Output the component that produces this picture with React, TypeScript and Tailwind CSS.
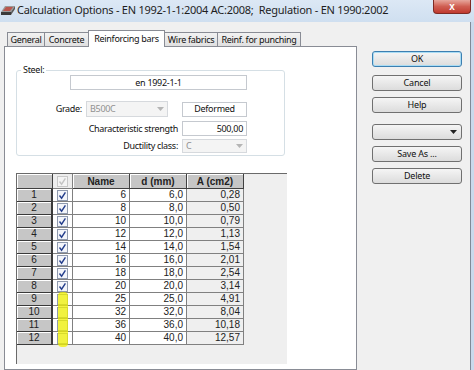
import React from "react";

const rows = [
  { n: 1, on: true, name: "6", d: "6,0", a: "0,28" },
  { n: 2, on: true, name: "8", d: "8,0", a: "0,50" },
  { n: 3, on: true, name: "10", d: "10,0", a: "0,79" },
  { n: 4, on: true, name: "12", d: "12,0", a: "1,13" },
  { n: 5, on: true, name: "14", d: "14,0", a: "1,54" },
  { n: 6, on: true, name: "16", d: "16,0", a: "2,01" },
  { n: 7, on: true, name: "18", d: "18,0", a: "2,54" },
  { n: 8, on: true, name: "20", d: "20,0", a: "3,14" },
  { n: 9, on: false, name: "25", d: "25,0", a: "4,91" },
  { n: 10, on: false, name: "32", d: "32,0", a: "8,04" },
  { n: 11, on: false, name: "36", d: "36,0", a: "10,18" },
  { n: 12, on: false, name: "40", d: "40,0", a: "12,57" },
];

const ui = { fontFamily: '"Noto Sans", "DejaVu Sans", sans-serif' };
const grid = { fontFamily: '"Liberation Sans", Arial, sans-serif' };

const Check = ({ on, dim }: { on: boolean; dim?: boolean }) => (
  <svg width="11" height="11" viewBox="0 0 11 11">
    <rect x="0.5" y="0.5" width="10" height="10" fill={dim ? "#f4f4f4" : "#f3f5fa"} stroke={dim ? "#c8c8c8" : "#8f9aae"} />
    {on && (
      <path d="M2.5 5.5 L4.6 8.2 L8.4 2.4" fill="none" stroke={dim ? "#c4c4c4" : "#243e8c"} strokeWidth="1.4" />
    )}
  </svg>
);

const Arrow = ({ color = "#222" }: { color?: string }) => (
  <svg width="7" height="4" viewBox="0 0 7 4">
    <path d="M0 0 H7 L3.5 4 Z" fill={color} />
  </svg>
);

const Btn = ({ label, focus, className = "" }: { label: string; focus?: boolean; className?: string }) => (
  <div
    className={`w-[90px] h-[16px] rounded-[3px] border flex items-center justify-center text-[9px] tracking-[-0.2px] text-[#111] bg-gradient-to-b from-[#f5f5f5] to-[#dcdcdc] ${
      focus ? "border-[#3c7fb1] shadow-[inset_0_0_0_1px_#a9dcf4]" : "border-[#707070]"
    } ${className}`}
  >
    {label}
  </div>
);

const Tab = ({ label, w, active }: { label: string; w: string; active?: boolean }) =>
  active ? (
    <div className={`${w} h-[17px] -mb-[1px] -ml-[1px] relative z-10 bg-white border border-b-0 border-[#898c95] flex items-start justify-center pt-[1px] whitespace-nowrap text-[9px] tracking-[-0.3px] text-[#111]`}>
      {label}
    </div>
  ) : (
    <div className={`${w} h-[14px] -ml-[1px] first:ml-0 border border-b-0 border-[#898c95] bg-gradient-to-b from-[#f2f2f2] to-[#e0e0e0] flex items-center justify-center whitespace-nowrap text-[9px] tracking-[-0.3px] text-[#111]`}>
      {label}
    </div>
  );

export default function App() {
  return (
    <div className="w-[474px] h-[370px] overflow-hidden bg-[#f0f0f0] flex flex-col" style={ui}>
      {/* Title bar */}
      <div className="h-[22px] shrink-0 flex items-start bg-gradient-to-b from-[#dce8f5] to-[#cfdff0]">
        <svg width="16" height="14" viewBox="0 0 16 14" className="mt-[3px] ml-[0px]">
          <path d="M1 9 L5 3 H15 L11 9 Z" fill="#9a9a9a" />
          <path d="M1 9 H11 V12 H1 Z" fill="#3a3a3a" />
          <path d="M11 9 L15 3 V6 L11 12 Z" fill="#5a5a5a" />
          <path d="M3 8 L6 4 H13 L10 8 Z" fill="#c0463c" opacity="0.8" />
        </svg>
        <div className="ml-[1px] mt-[3px] text-[11px] leading-[14px] text-[#1e1e1e] tracking-[-0.25px] whitespace-nowrap">
          Calculation Options - EN 1992-1-1:2004 AC:2008;&nbsp;&nbsp;Regulation - EN 1990:2002
        </div>
        <div className="ml-auto mr-[3px] w-[38px] h-[14px] rounded-b-[4px] border border-t-0 border-[#7e2b24] bg-gradient-to-b from-[#e6a69c] via-[#cf5e52] to-[#c0392e] flex items-center justify-center">
          <span className="text-white text-[10px] font-bold leading-none" style={grid}>x</span>
        </div>
      </div>

      <div className="flex flex-1 min-h-0">
        {/* Left: tab control */}
        <div className="w-[357px] pl-[4px] flex flex-col">
          <div className="h-[16px] mt-[8px] pl-[3px] flex items-end">
            <Tab label="General" w="w-[38px]" />
            <Tab label="Concrete" w="w-[45px]" />
            <Tab label="Reinforcing bars" w="w-[77px]" active />
            <Tab label="Wire fabrics" w="w-[54px]" />
            <Tab label="Reinf. for punching" w="w-[84px]" />
          </div>
          <div className="w-[353px] h-[330px] bg-white border border-[#898c95] pl-[11px] pt-[23px]">
            {/* Steel group */}
            <div className="relative w-[269px] h-[86px] border border-[#d5dfe5] rounded-[3px] text-[9px] tracking-[-0.3px] text-[#111]">
              <span className="absolute -top-[8px] left-[4px] px-[2px] bg-white leading-[14px]">Steel:</span>
              <div className="ml-[53px] mt-[4px] w-[177px] h-[15px] border border-[#c5c9cf] flex items-center justify-center">
                en 1992-1-1
              </div>
              <div className="flex items-center mt-[11px]">
                <div className="w-[65px] text-right">Grade:</div>
                <div className="ml-[4px] w-[82px] h-[16px] border border-[#d6d9dd] bg-[#f4f4f4] flex items-center justify-between px-[3px] text-[#909090]">
                  <span>B500C</span>
                  <Arrow color="#b5b5b5" />
                </div>
                <div className="ml-[14px] w-[65px] h-[15px] border border-[#c5c9cf] flex items-center justify-center">
                  Deformed
                </div>
              </div>
              <div className="flex items-center mt-[4px]">
                <div className="w-[161px] text-right">Characteristic strength</div>
                <div className="ml-[4px] w-[65px] h-[15px] border border-[#c5c9cf] flex items-center justify-end pr-[3px]">
                  500,00
                </div>
              </div>
              <div className="flex items-center mt-[3px]">
                <div className="w-[161px] text-right">Ductility class:</div>
                <div className="ml-[4px] w-[65px] h-[14px] border border-[#d6d9dd] bg-[#f4f4f4] flex items-center justify-between px-[3px] text-[#909090]">
                  <span>C</span>
                  <Arrow color="#b5b5b5" />
                </div>
              </div>
            </div>

            {/* Grid */}
            <div className="relative mt-[17px] w-[271px] h-[191px] bg-[#efefef] border-l border-t border-[#6a6a6a] text-[10px] text-[#222]" style={grid}>
              <div className="grid grid-cols-[36px_20px_57px_57px_57px] w-[227px]">
                <div className="h-[15px] bg-[#c6c6c6] border-r border-b border-[#404040] shadow-[inset_1px_1px_0_#ffffff]" />
                <div className="h-[15px] bg-[#ededed] border-r border-b border-[#808080] flex items-center justify-center">
                  <Check on dim />
                </div>
                {["Name", "d (mm)", "A (cm2)"].map((h) => (
                  <div key={h} className="h-[15px] bg-[#c6c6c6] border-r border-b border-[#404040] shadow-[inset_1px_1px_0_#ffffff] flex items-center justify-center font-bold text-[#222]">
                    {h}
                  </div>
                ))}
                {rows.map((r) => (
                  <React.Fragment key={r.n}>
                    <div className="h-[13px] bg-[#c6c6c6] border-r-2 border-b border-[#3a3a3a] shadow-[inset_1px_1px_0_#ffffff] flex items-center justify-center leading-none">
                      {r.n}
                    </div>
                    <div className="h-[13px] bg-white border-r border-b border-[#808080] flex items-center justify-center">
                      <Check on={r.on} />
                    </div>
                    <div className="h-[13px] bg-white border-r border-b border-[#808080] flex items-center justify-end pr-[3px] leading-none">
                      {r.name}
                    </div>
                    <div className="h-[13px] bg-white border-r border-b border-[#808080] flex items-center justify-end pr-[3px] leading-none">
                      {r.d}
                    </div>
                    <div className="h-[13px] bg-[#efefef] border-r border-b border-[#808080] flex items-center justify-end pr-[3px] leading-none">
                      {r.a}
                    </div>
                  </React.Fragment>
                ))}
              </div>
              {/* highlighter mark */}
              <div className="absolute left-[41px] top-[118px] w-[10px] h-[55px] rounded-[4px] bg-[#f0f000] opacity-75" />
            </div>
          </div>
        </div>

        {/* Right: buttons */}
        <div className="flex-1 pl-[15px] flex flex-col">
          <Btn label="OK" focus className="mt-[29px]" />
          <Btn label="Cancel" className="mt-[8px]" />
          <Btn label="Help" className="mt-[6px]" />
          <div className="mt-[11px] w-[90px] h-[16px] rounded-[3px] border border-[#707070] bg-gradient-to-b from-[#f5f5f5] to-[#dcdcdc] flex items-center justify-end pr-[4px]">
            <Arrow />
          </div>
          <Btn label="Save As ..." className="mt-[6px]" />
          <Btn label="Delete" className="mt-[6px]" />
        </div>

        {/* window frame */}
        <div className="w-[4px] border-l border-[#7f8a98] bg-[#c9d9ec]" />
      </div>
    </div>
  );
}
